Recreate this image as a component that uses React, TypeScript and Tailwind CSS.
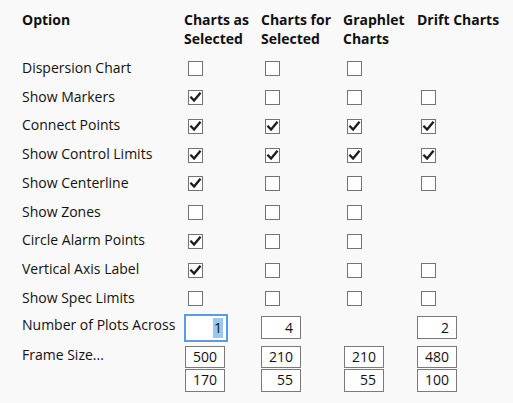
import React from 'react'

type Cell = boolean | null

interface Row {
  label: string
  cells: Cell[]
}

const rows: Row[] = [
  { label: 'Dispersion Chart', cells: [false, false, false, null] },
  { label: 'Show Markers', cells: [true, false, false, false] },
  { label: 'Connect Points', cells: [true, true, true, true] },
  { label: 'Show Control Limits', cells: [true, true, true, true] },
  { label: 'Show Centerline', cells: [true, false, false, false] },
  { label: 'Show Zones', cells: [false, false, false, null] },
  { label: 'Circle Alarm Points', cells: [true, false, false, null] },
  { label: 'Vertical Axis Label', cells: [true, false, false, false] },
  { label: 'Show Spec Limits', cells: [false, false, false, false] },
]

const grid = 'grid grid-cols-[162px_77px_82px_74px_1fr]'

export default function App() {
  return (
    <div
      className="h-[403px] w-[513px] overflow-hidden bg-[#f9f9f9] pl-[22px] pt-[10px] text-[14px] text-[#111]"
      style={{ fontFamily: '"Open Sans", "Noto Sans", sans-serif' }}
    >
      <div className={`${grid} h-[43px] font-bold leading-[19px]`}>
        <div>Option</div>
        <div>Charts as<br />Selected</div>
        <div>Charts for<br />Selected</div>
        <div>Graphlet<br />Charts</div>
        <div>Drift Charts</div>
      </div>

      {rows.map((row) => (
        <div key={row.label} className={`${grid} h-[28.75px] items-center`}>
          <div className="leading-[19px]">{row.label}</div>
          {row.cells.map((cell, index) => (
            <div key={index} className="pl-[4px] pt-[3px]">
              {cell !== null && <CheckBox checked={cell} />}
            </div>
          ))}
        </div>
      ))}

      <div className={`${grid} h-[28.75px] items-center`}>
        <div className="pb-[4px] leading-[19px]">Number of Plots Across</div>
        <div className="pt-[2px]">
          <div className="flex h-[28px] w-[44px] items-center justify-end border-2 border-[#5b9be6] bg-white pr-[3px]">
            <span className="bg-[#9cc8ef] px-[1px] leading-[20px]">1</span>
          </div>
        </div>
        <div className="pt-[2px]">
          <NumberBox value="4" />
        </div>
        <div />
        <div className="pt-[2px]">
          <NumberBox value="2" />
        </div>
      </div>

      <div className={`${grid} items-start pt-[5px]`}>
        <div className="-mt-[1px] leading-[19px]">Frame Size...</div>
        <FramePair width="500" height="170" offset />
        <FramePair width="210" height="55" />
        <div className="pl-[1px]">
          <FramePair width="210" height="55" />
        </div>
        <FramePair width="480" height="100" />
      </div>
    </div>
  )
}

function CheckBox({ checked }: { checked: boolean }) {
  return (
    <div className="h-[15px] w-[15px] border border-[#737373] bg-white">
      {checked && (
        <svg viewBox="0 0 13 13" width={13} height={13}>
          <path d="M2.2 6.6 L5.1 9.6 L10.8 2.6" fill="none" stroke="#1c1c1c" strokeWidth={2.3} strokeLinecap="square" />
        </svg>
      )}
    </div>
  )
}

function NumberBox({ value }: { value: string }) {
  return (
    <div className="flex h-[23px] w-[40px] items-center justify-end border border-[#7a7a7a] bg-white pr-[7px] leading-[20px]">
      {value}
    </div>
  )
}

function FramePair({ width, height, offset = false }: { width: string; height: string; offset?: boolean }) {
  return (
    <div className={`flex flex-col gap-[1px] ${offset ? 'pl-[1px]' : ''}`}>
      <div className="flex h-[22px] w-[40px] items-center justify-end border border-[#7a7a7a] bg-white pr-[7px] leading-[20px]">
        {width}
      </div>
      <div className="flex h-[23px] w-[40px] items-center justify-end border border-[#7a7a7a] bg-white pr-[7px] leading-[20px]">
        {height}
      </div>
    </div>
  )
}
